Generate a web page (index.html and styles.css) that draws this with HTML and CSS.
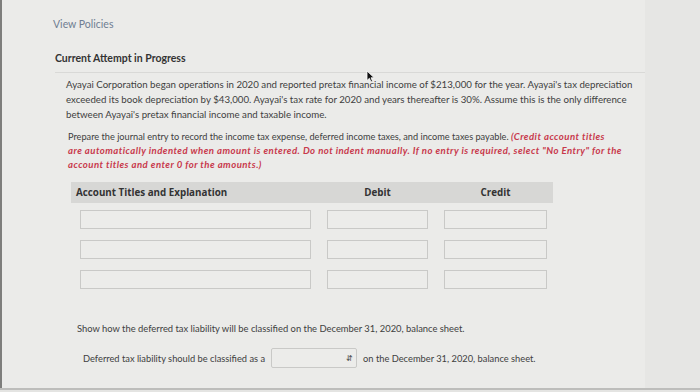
FILE: index.html
```html
<!DOCTYPE html>
<html lang="en">
<head>
<meta charset="utf-8">
<title>Current Attempt in Progress</title>
<link rel="stylesheet" href="styles.css">
</head>
<body>
<div class="screen">
  <div class="edge"></div>
  <main class="main">
    <a class="view-policies">View Policies</a>
    <h2 class="attempt">Current Attempt in Progress</h2>
    <p class="problem">Ayayai Corporation began operations in 2020 and reported pretax financial income of $213,000 for the year. Ayayai's tax depreciation<br>exceeded its book depreciation by $43,000. Ayayai's tax rate for 2020 and years thereafter is 30%. Assume this is the only difference<br>between Ayayai's pretax financial income and taxable income.</p>
    <p class="instruction">Prepare the journal entry to record the income tax expense, deferred income taxes, and income taxes payable. <em class="note">(Credit account titles<br>are automatically indented when amount is entered. Do not indent manually. If no entry is required, select "No Entry" for the<br>account titles and enter 0 for the amounts.)</em></p>

    <div class="journal">
      <div class="jhead">
        <div class="jh-account">Account Titles and Explanation</div>
        <div class="jh-num">Debit</div>
        <div class="jh-num">Credit</div>
      </div>
      <div class="jrow"><div class="field"></div><div class="field"></div><div class="field"></div></div>
      <div class="jrow"><div class="field"></div><div class="field"></div><div class="field"></div></div>
      <div class="jrow"><div class="field"></div><div class="field"></div><div class="field"></div></div>
    </div>

    <p class="show">Show how the deferred tax liability will be classified on the December 31, 2020, balance sheet.</p>
    <div class="classify">
      <span>Deferred tax liability should be classified as a</span>
      <div class="select"><span class="spin">&#8693;</span></div>
      <span>on the December 31, 2020, balance sheet.</span>
    </div>

    <svg class="cursor" width="9" height="13" viewBox="0 0 9 13"><path d="M1 1 L1 10.5 L3.4 8.3 L5 12 L6.6 11.3 L5 7.8 L8.2 7.8 Z" fill="#111" stroke="#fff" stroke-width="0.8"/></svg>
  </main>
  <div class="side"></div>
</div>
</body>
</html>
```
FILE: styles.css
```css
* { box-sizing: border-box; }
html, body { margin: 0; padding: 0; }
body {
  width: 700px;
  height: 392px;
  overflow: hidden;
  background: #e4e4e2;
  font-family: Lato, "Liberation Sans", sans-serif;
  color: #3c3c3c;
}
.screen {
  display: flex;
  height: 390px;
  border-bottom: 2px solid #bdbdbb;
}
.edge {
  width: 2px;
  background: #7e7e7c;
  flex: none;
}
.main {
  position: relative;
  width: 643px;
  flex: none;
  background: #ebebe9;
  padding: 17px 0 0 53px;
}
.side {
  flex: 1;
  background: #e6e6e4;
}
.view-policies {
  display: block;
  margin-left: -2px;
  font-size: 10.5px;
  line-height: 15px;
  color: #6f7e92;
}
.attempt {
  margin: 19px 0 0;
  padding-bottom: 6px;
  border-bottom: 1px solid #d9d9d7;
  font-size: 10.5px;
  line-height: 15px;
  font-weight: 700;
  color: #333;
}
.problem {
  margin: 4px 0 0 11px;
  font-size: 9.7px;
  line-height: 15px;
  color: #404040;
  white-space: nowrap;
}
.instruction {
  margin: 8px 0 0 13px;
  font-size: 9.2px;
  line-height: 14px;
  color: #404040;
  white-space: nowrap;
}
.note {
  font-family: Lato, "Open Sans", sans-serif;
  font-style: italic;
  font-weight: 700;
  font-size: 9.6px;
  line-height: 10px;
  letter-spacing: 0.45px;
  color: #c8394c;
}
.journal {
  margin: 10px 0 0 16px;
  width: 482px;
}
.jhead, .jrow {
  display: grid;
  grid-template-columns: 231px 101px 103px;
  column-gap: 16px;
  padding-left: 9px;
}
.jhead {
  height: 21px;
  align-items: center;
  background: #d7d7d5;
  padding-left: 5px;
  grid-template-columns: 235px 101px 103px;
  font-family: "Open Sans", "DejaVu Sans", sans-serif;
  font-weight: 700;
  font-size: 9.8px;
  color: #333;
}
.jh-num { text-align: center; }
.jrow { margin-top: 7px; }
.jrow + .jrow { margin-top: 11px; }
.field {
  height: 19px;
  border: 1px solid #c9c9c7;
  background: #ececea;
}
.show {
  margin: 33px 0 0 22px;
  font-size: 9.4px;
  line-height: 14px;
  color: #404040;
}
.classify {
  display: flex;
  align-items: center;
  gap: 6px;
  margin: 12px 0 0 28px;
  font-size: 9.3px;
  color: #404040;
}
.select {
  width: 86px;
  height: 20px;
  border: 1px solid #c9c9c7;
  border-radius: 2px;
  background: #ececea;
  display: flex;
  justify-content: flex-end;
  align-items: center;
  padding-right: 3px;
}
.spin {
  font-size: 8px;
  color: #555;
}
.cursor {
  position: absolute;
  left: 364px;
  top: 70px;
}
```
